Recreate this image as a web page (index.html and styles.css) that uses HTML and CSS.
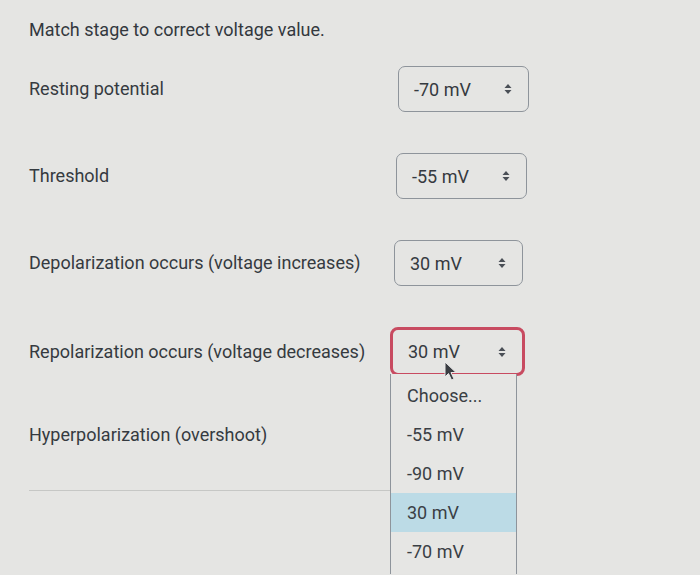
FILE: index.html
```html
<!DOCTYPE html>
<html lang="en">
<head>
<meta charset="utf-8">
<title>Match stage to correct voltage value</title>
<link rel="stylesheet" href="styles.css">
</head>
<body>
<main class="quiz">
  <p class="prompt">Match stage to correct voltage value.</p>
  <div class="rows">
    <div class="row">
      <span class="label">Resting potential</span>
      <div class="select s1"><span class="value">-70 mV</span><svg class="caret" viewBox="0 0 8 12" width="8" height="12"><path d="M4 1 L7.5 5 H0.5 Z M4 11 L7.5 7 H0.5 Z"/></svg></div>
    </div>
    <div class="row">
      <span class="label">Threshold</span>
      <div class="select s2"><span class="value">-55 mV</span><svg class="caret" viewBox="0 0 8 12" width="8" height="12"><path d="M4 1 L7.5 5 H0.5 Z M4 11 L7.5 7 H0.5 Z"/></svg></div>
    </div>
    <div class="row">
      <span class="label">Depolarization occurs (voltage increases)</span>
      <div class="select s3"><span class="value">30 mV</span><svg class="caret" viewBox="0 0 8 12" width="8" height="12"><path d="M4 1 L7.5 5 H0.5 Z M4 11 L7.5 7 H0.5 Z"/></svg></div>
    </div>
    <div class="row">
      <span class="label">Repolarization occurs (voltage decreases)</span>
      <div class="select-wrap">
        <div class="select focused"><span class="value">30 mV</span><svg class="caret" viewBox="0 0 8 12" width="8" height="12"><path d="M4 1 L7.5 5 H0.5 Z M4 11 L7.5 7 H0.5 Z"/></svg></div>
        <ul class="menu">
          <li class="option">Choose...</li>
          <li class="option">-55 mV</li>
          <li class="option">-90 mV</li>
          <li class="option active">30 mV</li>
          <li class="option">-70 mV</li>
        </ul>
        <svg class="cursor" viewBox="0 0 14 21" width="14" height="21"><path d="M1 1 L1 16 L4.5 12.5 L7.5 19 L10 18 L7 11.5 L12 11.5 Z"/></svg>
      </div>
    </div>
    <div class="row row-last">
      <span class="label">Hyperpolarization (overshoot)</span>
    </div>
  </div>
  <div class="divider"></div>
</main>
</body>
</html>
```

FILE: styles.css
```css
html, body {
  margin: 0;
  padding: 0;
  background: #e5e5e3;
}

body {
  font-family: Roboto, "Liberation Sans", sans-serif;
  color: #353a40;
  font-size: 18px;
  width: 700px;
  height: 575px;
  overflow: hidden;
}

.quiz {
  padding: 20px 0 0 29px;
}

.prompt {
  margin: 0 0 26px 0;
  line-height: 20px;
  font-size: 18px;
  color: #33383e;
}

.rows {
  display: grid;
  grid-auto-rows: 46px;
  row-gap: 41px;
}

.row {
  display: grid;
  grid-template-columns: 365px 136px;
  align-items: center;
}

.row-last {
  margin-top: -4px;
}

.label {
  line-height: 20px;
}

.select {
  box-sizing: border-box;
  width: 131px;
  height: 46px;
  border: 1.5px solid #8e949b;
  border-radius: 7px;
  display: flex;
  align-items: center;
  justify-content: space-between;
  padding: 0 16px 0 15px;
}

.s1 { margin-left: 4px; }
.s2 { margin-left: 2px; }
.s3 { margin-left: 0; width: 129px; }

.value {
  color: #353a40;
}

.caret {
  fill: #4a4f56;
}

.select-wrap {
  position: relative;
  margin-left: -4px;
}

.select.focused {
  width: 135px;
  height: 49px;
  border: 3px solid #c84b61;
  border-radius: 8px;
  padding: 0 16px 0 15px;
}

.menu {
  position: absolute;
  top: 47px;
  left: 0;
  width: 127px;
  height: 200px;
  box-sizing: border-box;
  margin: 0;
  padding: 2px 0 0 0;
  list-style: none;
  border-left: 1.5px solid #8e949b;
  border-right: 1.5px solid #8e949b;
  background: #e6e6e4;
  overflow: hidden;
}

.option {
  height: 39px;
  line-height: 39px;
  padding-left: 16px;
  color: #3a3f45;
}

.option.active {
  background: #bcdbe6;
}

.cursor {
  position: absolute;
  top: 34px;
  left: 54px;
  fill: #3a3d42;
  stroke: #e8e8e8;
  stroke-width: 1;
}

.divider {
  margin-top: 30px;
  width: 362px;
  height: 1px;
  background: #c6c7c5;
}
```
